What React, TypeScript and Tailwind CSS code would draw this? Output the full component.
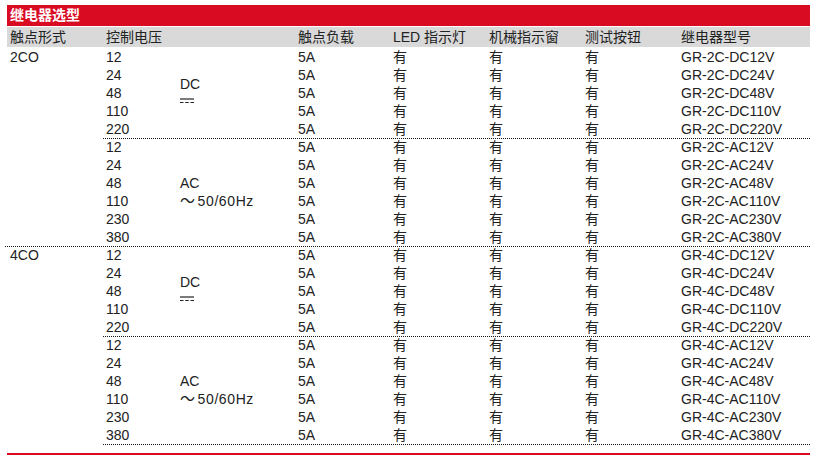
import React from 'react'

const font = { fontFamily: '"Liberation Sans", "Noto Sans CJK SC", sans-serif' }

type Sub = { kind: 'DC' | 'AC'; volts: string[] }

const groups: { name: string; code: string; subs: Sub[] }[] = [
  {
    name: '2CO',
    code: '2C',
    subs: [
      { kind: 'DC', volts: ['12', '24', '48', '110', '220'] },
      { kind: 'AC', volts: ['12', '24', '48', '110', '230', '380'] },
    ],
  },
  {
    name: '4CO',
    code: '4C',
    subs: [
      { kind: 'DC', volts: ['12', '24', '48', '110', '220'] },
      { kind: 'AC', volts: ['12', '24', '48', '110', '230', '380'] },
    ],
  },
]

function DcMark() {
  return (
    <svg width="14" height="6" viewBox="0 0 14 6" className="block mt-[5px]">
      <line x1="0" y1="1" x2="14" y2="1" stroke="#222" strokeWidth="1.2" />
      <line x1="0" y1="4.5" x2="3.5" y2="4.5" stroke="#222" strokeWidth="1" />
      <line x1="5.25" y1="4.5" x2="8.75" y2="4.5" stroke="#222" strokeWidth="1" />
      <line x1="10.5" y1="4.5" x2="14" y2="4.5" stroke="#222" strokeWidth="1" />
    </svg>
  )
}

function SubBlock({ sub, code, border }: { sub: Sub; code: string; border: string }) {
  return (
    <div className={`flex ${border}`}>
      <div className="w-[74px] flex flex-col">
        {sub.volts.map((v, i) => (
          <div key={i} className="h-[18px] leading-[18px] pl-[3px]">{v}</div>
        ))}
      </div>
      <div className="w-[118px] flex flex-col justify-center pl-[3px]">
        <div className="leading-[18px]">{sub.kind}</div>
        {sub.kind === 'DC' ? (
          <div className="h-[18px]"><DcMark /></div>
        ) : (
          <div className="leading-[18px] tracking-[0.6px]">
            <span className="text-[15px] mr-[2px]">～</span>50/60Hz
          </div>
        )}
      </div>
      <div className="flex-1 flex flex-col">
        {sub.volts.map((v, i) => (
          <div key={i} className="h-[18px] leading-[18px] grid grid-cols-[95px_96px_96px_96px_1fr]">
            <span className="pl-[3px]">5A</span>
            <span className="pl-[3px]">有</span>
            <span className="pl-[3px]">有</span>
            <span className="pl-[3px]">有</span>
            <span className="pl-[3px]">GR-{code}-{sub.kind}{v}V</span>
          </div>
        ))}
      </div>
    </div>
  )
}

export default function App() {
  return (
    <div className="w-[818px] h-[462px] bg-white pt-[5px] pl-[7px] text-[14px] text-[#222]" style={font}>
      <div className="w-[803px]">
        <div className="h-[21px] bg-[#d90b22] text-white font-bold leading-[21px] pl-[3px]">继电器选型</div>
        <div className="mt-px h-[20px] bg-[#d9d9d9] leading-[20px] grid grid-cols-[96px_74px_118px_95px_96px_96px_96px_1fr]">
          <span className="pl-[3px]">触点形式</span>
          <span className="pl-[3px]">控制电压</span>
          <span />
          <span className="pl-[3px]">触点负载</span>
          <span className="pl-[3px]">LED 指示灯</span>
          <span className="pl-[3px]">机械指示窗</span>
          <span className="pl-[3px]">测试按钮</span>
          <span className="pl-[3px]">继电器型号</span>
        </div>
        <div className="h-px" />
        {groups.map((g, gi) => (
          <div
            key={g.name}
            className={`flex ${gi === 0 ? 'border-b border-dotted border-[#111] -mb-px -ml-[2px] pl-[2px]' : ''}`}
          >
            <div className="w-[96px] h-[18px] leading-[18px] pl-[3px]">{g.name}</div>
            <div className="flex-1 flex flex-col">
              {g.subs.map((s, si) => (
                <SubBlock
                  key={si}
                  sub={s}
                  code={g.code}
                  border={
                    si === 0 || gi === 1 ? 'border-b border-dotted border-[#111] -mb-px' : ''
                  }
                />
              ))}
            </div>
          </div>
        ))}
        <div className="mt-[9px] h-[2px] bg-[#d90b22]" />
      </div>
    </div>
  )
}
